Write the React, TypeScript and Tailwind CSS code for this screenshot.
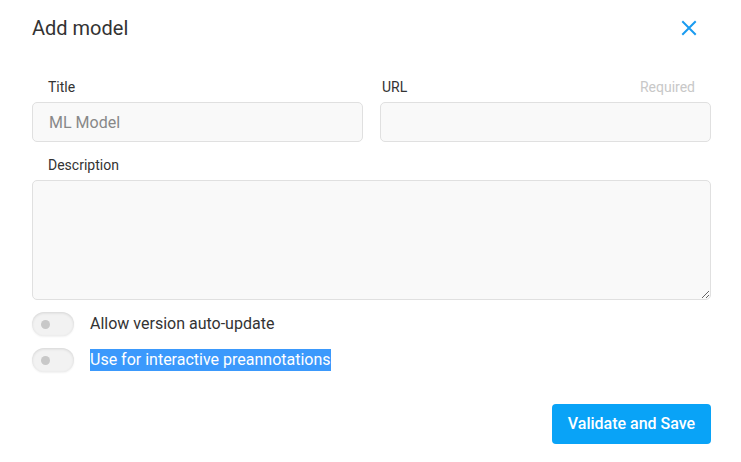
import React from "react";

const Toggle = () => (
  <div className="flex h-[24px] w-[42px] shrink-0 items-center rounded-full bg-[#f2f2f2] pl-[9px] shadow-[0_1px_3px_rgba(0,0,0,0.12)_inset,0_1px_2px_rgba(0,0,0,0.06)]">
    <div className="h-[9px] w-[9px] rounded-full bg-[#c8c8c8]" />
  </div>
);

const App = () => {
  return (
    <div className="h-[462px] w-[741px] bg-white pl-[32px] pr-[30px] pt-[16px] font-['Roboto',sans-serif] text-[#333]">
      {/* Header */}
      <div className="flex h-[24px] items-center justify-between">
        <h1 className="text-[20px] font-normal text-[#333]">Add model</h1>
        <button className="mr-[14px] text-[#1a9bf0]">
          <svg width="16" height="16" viewBox="0 0 16 16" fill="none" stroke="currentColor" strokeWidth="2" strokeLinecap="square">
            <path d="M2 2L14 14M14 2L2 14" />
          </svg>
        </button>
      </div>

      {/* Title / URL */}
      <div className="mt-[39px] grid grid-cols-2 gap-[17px]">
        <div className="flex flex-col">
          <label className="mb-[6px] px-[16px] text-[14px] leading-[17px] text-[#333]">Title</label>
          <input
            placeholder="ML Model"
            className="h-[40px] rounded-[5px] border border-[#e0e0e0] bg-[#f9f9f9] px-[16px] text-[16px] text-[#333] placeholder:text-[#888] outline-none"
          />
        </div>
        <div className="flex flex-col">
          <div className="mb-[6px] flex justify-between pl-[2px] pr-[16px] text-[14px] leading-[17px]">
            <span className="text-[#333]">URL</span>
            <span className="text-[#c8c8c8]">Required</span>
          </div>
          <input className="h-[40px] rounded-[5px] border border-[#e0e0e0] bg-[#f9f9f9] px-[16px] text-[16px] outline-none" />
        </div>
      </div>

      {/* Description */}
      <div className="mt-[15px] flex flex-col">
        <label className="mb-[6px] px-[16px] text-[14px] leading-[17px] text-[#333]">Description</label>
        <textarea className="h-[120px] resize-y rounded-[5px] border border-[#e0e0e0] bg-[#f9f9f9] px-[16px] py-[10px] outline-none" />
      </div>

      {/* Toggles */}
      <div className="mt-[12px] flex flex-col gap-[12px]">
        <div className="flex items-center gap-[16px]">
          <Toggle />
          <span className="text-[16px] text-[#333]">Allow version auto-update</span>
        </div>
        <div className="flex items-center gap-[16px]">
          <Toggle />
          <span className="bg-[#3b99fc] text-[16px] leading-[22px] text-white">Use for interactive preannotations</span>
        </div>
      </div>

      {/* Footer */}
      <div className="mt-[32px] flex justify-end">
        <button className="h-[40px] w-[159px] rounded-[4px] bg-[#09a3f7] text-[16px] font-medium text-white">
          Validate and Save
        </button>
      </div>
    </div>
  );
};

export default App;
